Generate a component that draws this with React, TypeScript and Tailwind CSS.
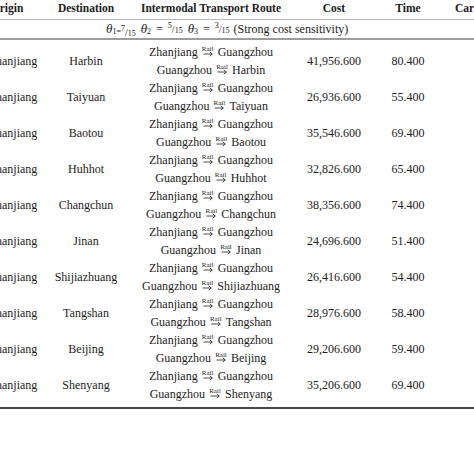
import React from 'react';

type Row = {
    origin: string;
    dest: string;
    cost: string;
    time: string;
};

const rows: Row[] = [
    { origin: 'Zhanjiang', dest: 'Harbin', cost: '41,956.600', time: '80.400' },
    { origin: 'Zhanjiang', dest: 'Taiyuan', cost: '26,936.600', time: '55.400' },
    { origin: 'Zhanjiang', dest: 'Baotou', cost: '35,546.600', time: '69.400' },
    { origin: 'Zhanjiang', dest: 'Huhhot', cost: '32,826.600', time: '65.400' },
    { origin: 'Zhanjiang', dest: 'Changchun', cost: '38,356.600', time: '74.400' },
    { origin: 'Zhanjiang', dest: 'Jinan', cost: '24,696.600', time: '51.400' },
    { origin: 'Zhanjiang', dest: 'Shijiazhuang', cost: '26,416.600', time: '54.400' },
    { origin: 'Zhanjiang', dest: 'Tangshan', cost: '28,976.600', time: '58.400' },
    { origin: 'Zhanjiang', dest: 'Beijing', cost: '29,206.600', time: '59.400' },
    { origin: 'Zhanjiang', dest: 'Shenyang', cost: '35,206.600', time: '69.400' },
];

const cols = 'grid grid-cols-[86px_60px_190px_56px_92px_140px]';

// "Rail" stacked over a thin arrow (label is overlaid above the arrow)
const Rail = () => (
    <span className="relative inline-block w-[10px] h-[6px] mx-[5px] align-[-1px]">
        <svg width="10" height="6" viewBox="0 0 10 6" className="absolute left-0 top-0">
            <path d="M0.5 3H9.2M6.8 0.9L9.3 3L6.8 5.1" fill="none" stroke="#1c1c1c" strokeWidth="0.8" />
        </svg>
        <span className="absolute left-1/2 -translate-x-1/2 bottom-[4px] text-[7px] leading-none">Rail</span>
    </span>
);

const Frac = ({ n, d }: { n: string; d: string }) => (
    <span className="text-[8px] inline-flex items-center">
        <span className="relative top-[-3px]">{n}</span>
        <span className="text-[10px]">/</span>
        <span className="relative top-[2px]">{d}</span>
    </span>
);

const Cell = ({ children, bold, className = '' }: { children: React.ReactNode; bold?: boolean; className?: string }) => (
    <div className={`flex justify-center items-center whitespace-nowrap ${bold ? 'font-bold' : ''} ${className}`}>{children}</div>
);

export default function App() {
    return (
        <div className="w-[474px] h-[474px] overflow-hidden bg-white text-[#1c1c1c] font-['Liberation_Serif',serif] text-[12px]">
            <div className="ml-[-30px] w-[624px]">
                {/* header */}
                <div className={`${cols} h-[20px] border-b border-[#b8b8b8] text-[11.5px] pb-[2px]`}>
                    <Cell bold className="pr-[12px]">Origin</Cell>
                    <Cell bold>Destination</Cell>
                    <Cell bold>Intermodal Transport Route</Cell>
                    <Cell bold>Cost</Cell>
                    <Cell bold>Time</Cell>
                    <div className="flex items-center font-bold whitespace-nowrap pl-[1px]">Carbon Emission</div>
                </div>

                {/* weights */}
                <div className="h-[20px] border-b-2 border-[#9c9c9c] flex items-center pl-[136px] whitespace-nowrap">
                    <span className="italic text-[13px]">θ</span>
                    <span className="text-[8px] relative top-[3px] inline-flex items-center">
                        1=<Frac n="7" d="15" />
                    </span>
                    <span className="italic text-[13px] ml-[5px]">θ</span>
                    <span className="text-[8px] relative top-[3px]">2</span>
                    <span className="mx-[5px]">=</span>
                    <Frac n="5" d="15" />
                    <span className="italic text-[13px] ml-[5px]">θ</span>
                    <span className="text-[8px] relative top-[3px]">3</span>
                    <span className="mx-[5px]">=</span>
                    <Frac n="3" d="15" />
                    <span className="ml-[4px]">(Strong cost sensitivity)</span>
                </div>

                {/* body */}
                <div className="pt-[3px] pb-[4px] border-b-2 border-[#474747]">
                    {rows.map((r) => (
                        <div key={r.dest} className={`${cols} h-[36px]`}>
                            <Cell>{r.origin}</Cell>
                            <Cell>{r.dest}</Cell>
                            <div className="text-center whitespace-nowrap leading-[18px]">
                                <div className="h-[18px]">
                                    Zhanjiang<Rail />Guangzhou
                                </div>
                                <div className="h-[18px]">
                                    Guangzhou<Rail />{r.dest}
                                </div>
                            </div>
                            <Cell>{r.cost}</Cell>
                            <Cell>{r.time}</Cell>
                            <div />
                        </div>
                    ))}
                </div>
            </div>
        </div>
    );
}
